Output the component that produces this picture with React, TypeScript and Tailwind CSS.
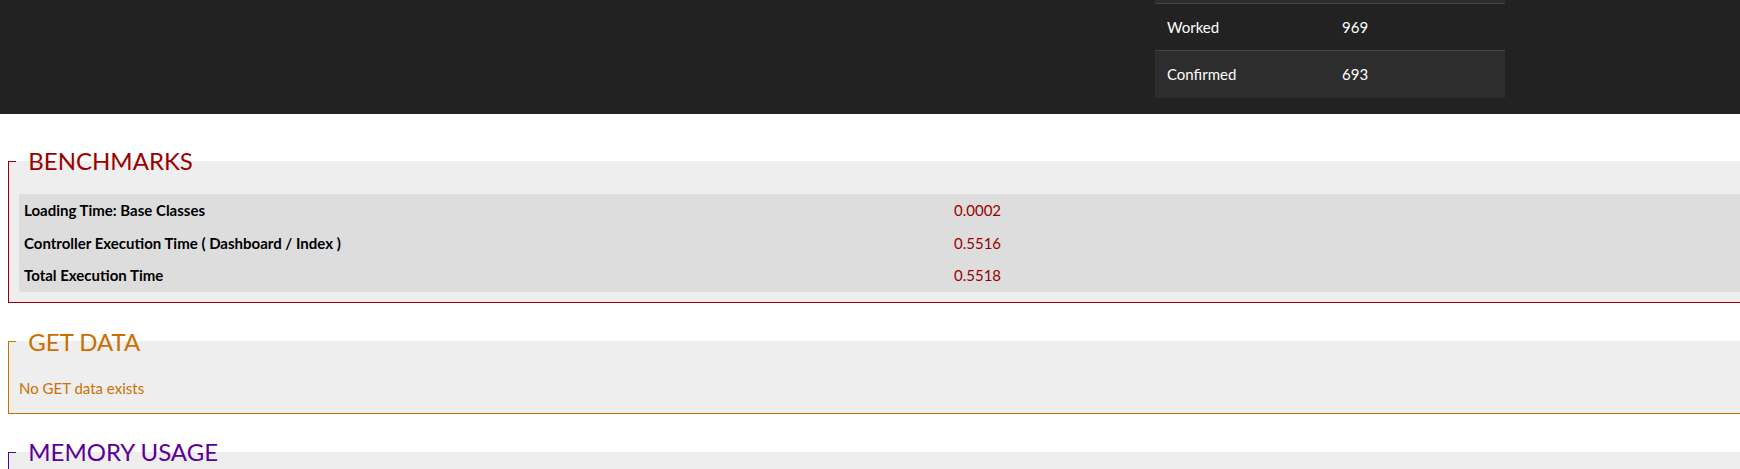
import React from 'react';

const benchRows: [string, string][] = [
  ['Loading Time: Base Classes', '0.0002'],
  ['Controller Execution Time ( Dashboard / Index )', '0.5516'],
  ['Total Execution Time', '0.5518'],
];

export default function App() {
  return (
    <div className="w-[1740px] h-[469px] overflow-hidden bg-white font-['Lato','Liberation_Sans',sans-serif]">
      <div className="h-[114px] bg-[#222222] overflow-hidden">
        <div className="ml-[1155px] w-[350px] text-[15px] text-white">
          <div className="mt-[-44px] h-[47px] bg-[#2d2d2d]" />
          <div className="grid h-[47px] grid-cols-2 items-center border-t border-[#444444]">
            <div className="px-3">Worked</div>
            <div className="px-3">969</div>
          </div>
          <div className="grid h-[48px] grid-cols-2 items-center border-t border-[#444444] bg-[#2d2d2d]">
            <div className="px-3">Confirmed</div>
            <div className="px-3">693</div>
          </div>
        </div>
      </div>

      <fieldset className="ml-2 mt-[28px] w-[1882px] border border-[#990000] bg-[#eeeeee] px-[10px] pt-[6px] pb-[10px]">
        <legend className="ml-[-3px] w-full text-[24px] leading-[38px] text-[#990000] mb-[8px]">
          {'\u00a0\u00a0BENCHMARKS\u00a0\u00a0'}
        </legend>
        <div className="text-[15px] leading-[22.5px]">
          {benchRows.map(([k, v]) => (
            <div key={k} className="grid grid-cols-2 bg-[#dddddd]">
              <div className="p-[5px] font-bold text-black">{k}</div>
              <div className="p-[5px] text-[#990000]">{v}</div>
            </div>
          ))}
        </div>
      </fieldset>

      <fieldset className="ml-2 mt-5 w-[1882px] border border-[#cd6e00] bg-[#eeeeee] px-[10px] pt-[6px] pb-[10px]">
        <legend className="ml-[-3px] w-full text-[24px] leading-[38px] text-[#cd6e00] mb-[6px]">
          {'\u00a0\u00a0GET DATA\u00a0\u00a0'}
        </legend>
        <div className="py-1 text-[15px] leading-[22.5px] text-[#cd6e00]">No GET data exists</div>
      </fieldset>

      <fieldset className="ml-2 mt-[19px] w-[1882px] border border-[#5a0099] bg-[#eeeeee] px-[10px] pt-[6px] pb-[10px]">
        <legend className="ml-[-3px] w-full text-[24px] leading-[38px] text-[#5a0099] mb-[6px]">
          {'\u00a0\u00a0MEMORY USAGE\u00a0\u00a0'}
        </legend>
      </fieldset>
    </div>
  );
}
